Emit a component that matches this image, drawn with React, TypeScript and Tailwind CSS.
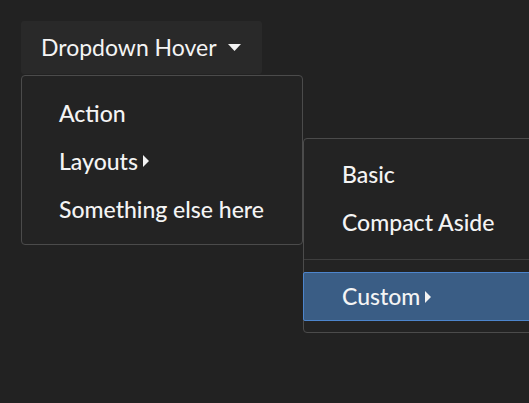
const items = ["Action", "Layouts", "Something else here"];

function Caret({ dir }: { dir: "down" | "right" }) {
  if (dir === "down") {
    return (
      <svg width="13" height="7" viewBox="0 0 13 7" className="ml-[11px]">
        <path d="M0 0 L13 0 L6.5 7 Z" fill="#f2f2f2" />
      </svg>
    );
  }
  return (
    <svg width="6" height="12" viewBox="0 0 6 12" className="ml-[5px]">
      <path d="M0 0 L6 6 L0 12 Z" fill="#f2f2f2" />
    </svg>
  );
}

export default function App() {
  return (
    <div
      className="relative w-[529px] h-[403px] overflow-hidden bg-[#222222] text-[#f4f4f4]"
      style={{ fontFamily: "Lato, 'Noto Sans', sans-serif" }}
    >
      <div className="absolute left-[21px] top-[21px]">
        <button className="flex items-center h-[53px] w-[241px] pl-[20px] bg-[#292929] rounded-[3px] text-[23px]">
          Dropdown Hover
          <Caret dir="down" />
        </button>
      </div>

      {/* main menu */}
      <div className="absolute left-[21px] top-[75px] w-[282px] h-[170px] pt-[13px] border border-[#4b4b4b] rounded-[4px] bg-[#232323]">
        {items.map((item) => (
          <div key={item} className="flex items-center h-[48px] pl-[37px] text-[23px] font-medium">
            {item}
            {item === "Layouts" && <Caret dir="right" />}
          </div>
        ))}
      </div>

      {/* submenu */}
      <div className="absolute left-[303px] top-[138px] w-[260px] h-[195px] pt-[11px] border border-[#4b4b4b] rounded-[4px] bg-[#232323]">
        <div className="flex items-center h-[48px] pl-[38px] text-[23px] font-medium">Basic</div>
        <div className="flex items-center h-[48px] pl-[38px] text-[23px] font-medium">Compact Aside</div>
        <div className="h-[26px] flex items-center">
          <div className="w-full h-px bg-[#3e3e3e]" />
        </div>
        <div className="flex items-center h-[49px] -ml-px pl-[38px] text-[23px] font-medium bg-[#3a5d85] border border-[#4d85cc] rounded-[2px]">
          Custom
          <Caret dir="right" />
        </div>
      </div>
    </div>
  );
}
